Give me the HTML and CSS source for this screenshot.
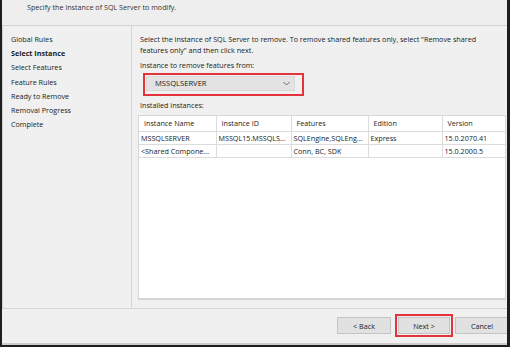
FILE: index.html
```
<!DOCTYPE html>
<html lang="en">
<head>
    <meta charset="UTF-8">
    <title>SQL Server 2019 Setup - Remove</title>
    <link rel="stylesheet" href="styles.css">
</head>
<body>
    <div class="window">
        <div class="header">Specify the instance of SQL Server to modify.</div>
        <div class="main">
            <div class="nav">
                <div class="step">Global Rules</div>
                <div class="step active">Select Instance</div>
                <div class="step">Select Features</div>
                <div class="step">Feature Rules</div>
                <div class="step">Ready to Remove</div>
                <div class="step">Removal Progress</div>
                <div class="step">Complete</div>
            </div>
            <div class="content">
                <p class="intro">Select the instance of SQL Server to remove. To remove shared features only, select "Remove shared features only" and then click next.</p>
                <div class="label">Instance to remove features from:</div>
                <div class="mark combo-mark">
                    <div class="combo">
                        <span>MSSQLSERVER</span>
                        <svg class="chev" width="7" height="5" viewBox="0 0 7 5"><path d="M0.5 1 L3.5 4 L6.5 1" fill="none" stroke="#666" stroke-width="1"/></svg>
                    </div>
                </div>
                <div class="label installed">Installed instances:</div>
                <div class="list">
                    <table>
                        <tr class="head">
                            <th class="c1">Instance Name</th>
                            <th class="c2">Instance ID</th>
                            <th class="c3">Features</th>
                            <th class="c4">Edition</th>
                            <th class="c5">Version</th>
                        </tr>
                        <tr>
                            <td>MSSQLSERVER</td>
                            <td>MSSQL15.MSSQLS...</td>
                            <td>SQLEngine,SQLEng...</td>
                            <td>Express</td>
                            <td>15.0.2070.41</td>
                        </tr>
                        <tr>
                            <td>&lt;Shared Compone...</td>
                            <td></td>
                            <td>Conn, BC, SDK</td>
                            <td></td>
                            <td>15.0.2000.5</td>
                        </tr>
                    </table>
                </div>
            </div>
        </div>
        <div class="footer">
            <button class="btn">&lt; Back</button>
            <div class="mark next-mark"><button class="btn">Next &gt;</button></div>
            <button class="btn cancel">Cancel</button>
        </div>
    </div>
</body>
</html>
```

FILE: styles.css
```
body {
    margin: 0;
    width: 510px;
    height: 347px;
    overflow: hidden;
    font-family: "Open Sans", "Noto Sans", sans-serif;
    font-size: 7.2px;
    color: #1b1b1b;
    background: #f0f0f0;
}
.window {
    box-sizing: border-box;
    height: 347px;
    display: flex;
    flex-direction: column;
    background: #f0f0f0;
    border-left: 2px solid #1e1e1e;
    border-right: 3px solid #1e1e1e;
    border-bottom: 2px solid #1e1e1e;
}
.header {
    height: 26px;
    box-sizing: border-box;
    padding: 2px 0 0 25px;
    line-height: 10px;
    color: #333;
    background: #eeeeee;
    border-bottom: 1px solid #d3d3d3;
}
.main {
    flex: 1;
    display: flex;
    min-height: 0;
}
.nav {
    width: 130px;
    padding: 6px 0 0 8px;
    box-sizing: border-box;
    border-right: 1px solid #d6d6d6;
    border-left: 1px solid #d0d0d0;
}
.step {
    line-height: 14.2px;
}
.step.active {
    font-weight: bold;
}
.content {
    flex: 1;
    padding: 8px 1px 0 7px;
    display: flex;
    flex-direction: column;
    min-width: 0;
}
.intro {
    margin: 0 0 0 1px;
    line-height: 10.5px;
    width: 350px;
}
.label {
    margin: 5px 0 0 1px;
    line-height: 10.5px;
}
.mark {
    border: 2px solid #e5333b;
}
.combo-mark {
    align-self: flex-start;
    margin: 2px 0 0 4px;
    padding: 1px 7px 3px 1px;
}
.combo {
    width: 149px;
    height: 15px;
    box-sizing: border-box;
    display: flex;
    align-items: center;
    justify-content: space-between;
    padding: 0 4px 0 8px;
    font-size: 7.6px;
    background: #e3e3e3;
    border: 1px solid #d9d9d9;
}
.chev {
    display: block;
}
.installed {
    margin-top: 4px;
}
.list {
    margin: 5px 0 8px -1px;
    flex: 1;
    background: #fff;
    border: 1px solid #d6d6d6;
    border-bottom: 2px solid #d6d6d6;
}
table {
    border-collapse: collapse;
    width: 100%;
    table-layout: fixed;
}
th, td {
    box-sizing: border-box;
    border-right: 1px solid #dcdcdc;
    border-bottom: 1px solid #dcdcdc;
    text-align: left;
    white-space: nowrap;
    overflow: hidden;
    padding: 0 0 0 2px;
    height: 13px;
    font-weight: normal;
}
th {
    height: 15px;
    padding-left: 5px;
}
th:last-child, td:last-child {
    border-right: none;
}
.c1 { width: 77px; }
.c2 { width: 75px; }
.c3 { width: 77px; }
.c4 { width: 74px; }
.footer {
    height: 37px;
    flex-shrink: 0;
    box-sizing: border-box;
    border-top: 1px solid #d6d6d6;
    border-bottom: 2px solid #cdcdcd;
    display: flex;
    justify-content: flex-end;
    align-items: flex-start;
    padding-top: 5px;
    overflow: hidden;
}
.btn {
    width: 54px;
    height: 17px;
    margin-top: 3px;
    padding: 0;
    font-family: inherit;
    font-size: 7.2px;
    color: #1b1b1b;
    background: #e1e1e1;
    border: 1px solid #c4c4c4;
}
.next-mark {
    margin-left: 4px;
    padding: 1px;
}
.next-mark .btn {
    width: 52px;
    margin-top: 0;
    display: block;
}
.cancel {
    margin-left: 2px;
    margin-right: -2px;
    flex-shrink: 0;
}
```
